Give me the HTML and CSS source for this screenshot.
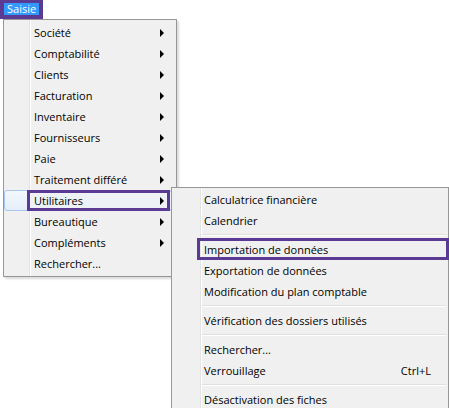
FILE: index.html
```html
<html>

<head>
    <title>Saisie</title>
    <link rel="stylesheet" href="styles.css">
</head>

<body>
    <div class="menubar">
        <span class="menubar_title">Saisie</span>
    </div>

    <div class="menu main_menu">
        <div class="item">Société<span class="arrow"></span></div>
        <div class="item">Comptabilité<span class="arrow"></span></div>
        <div class="item">Clients<span class="arrow"></span></div>
        <div class="item">Facturation<span class="arrow"></span></div>
        <div class="item">Inventaire<span class="arrow"></span></div>
        <div class="item">Fournisseurs<span class="arrow"></span></div>
        <div class="item">Paie<span class="arrow"></span></div>
        <div class="item">Traitement différé<span class="arrow"></span></div>
        <div class="item item_hover"><span class="mark mark_utilitaires"></span><span class="label">Utilitaires</span><span class="arrow"></span></div>
        <div class="item">Bureautique<span class="arrow"></span></div>
        <div class="item">Compléments<span class="arrow"></span></div>
        <div class="item">Rechercher...</div>
    </div>

    <div class="menu sub_menu">
        <div class="item">Calculatrice financière</div>
        <div class="item">Calendrier</div>
        <div class="separator"></div>
        <div class="item">Importation de données<span class="mark mark_import"></span></div>
        <div class="item">Exportation de données</div>
        <div class="item">Modification du plan comptable</div>
        <div class="separator"></div>
        <div class="item">Vérification des dossiers utilisés</div>
        <div class="separator"></div>
        <div class="item">Rechercher...</div>
        <div class="item">Verrouillage<span class="shortcut">Ctrl+L</span></div>
        <div class="separator"></div>
        <div class="item">Désactivation des fiches</div>
    </div>
</body>

</html>
```

FILE: styles.css
```css
body {
    margin: 0;
    background-color: #ffffff;
    font-family: 'Open Sans', 'Noto Sans', sans-serif;
    font-size: 11px;
    color: #000000;
}

/* top menu bar */
.menubar {
    display: inline-block;
    border: 3px solid #5b3a94;
    border-bottom-width: 4px;
    border-left-width: 4px;
    border-right-width: 4px;
    height: 12px;
}

.menubar_title {
    display: block;
    height: 12px;
    line-height: 12px;
    padding: 0 3px;
    background-color: #3399ff;
    color: #ffffff;
}

/* drop down menus */
.menu {
    position: absolute;
    box-sizing: border-box;
    background-color: #f0f0f0;
    border: 1px solid #979797;
    box-shadow: 2px 2px 2px rgba(0, 0, 0, 0.15);
}

.main_menu {
    left: 3px;
    top: 19px;
    width: 174px;
    padding: 2px 4px 2px 0;
    background-image: linear-gradient(to right, transparent 25px, #e2e3e3 25px, #e2e3e3 26px, #ffffff 26px, #ffffff 27px, transparent 27px);
}

.sub_menu {
    left: 171px;
    top: 187px;
    width: 278px;
    padding: 1px 2px;
    background-image: linear-gradient(to right, transparent 28px, #e2e3e3 28px, #e2e3e3 29px, #ffffff 29px, #ffffff 30px, transparent 30px);
}

.item {
    position: relative;
    display: flex;
    align-items: center;
    height: 21px;
    white-space: nowrap;
}

.main_menu .item {
    padding: 0 8px 0 30px;
}

.sub_menu .item {
    padding: 0 15px 0 30px;
}

.item_hover {
    box-sizing: border-box;
    border: 1px solid #a8c8ef;
    border-radius: 3px;
    background: linear-gradient(#f4f8fd, #e4eefb);
}

.main_menu .item_hover {
    padding-left: 29px;
    padding-right: 7px;
}

.item_hover .label,
.item_hover .arrow {
    position: relative;
}

.arrow {
    margin-left: auto;
    width: 0;
    height: 0;
    border-top: 4px solid transparent;
    border-bottom: 4px solid transparent;
    border-left: 4px solid #000000;
}

.shortcut {
    margin-left: auto;
}

.separator {
    height: 1px;
    margin: 3px 0 3px 28px;
    background-color: #e0e0e0;
    border-bottom: 1px solid #ffffff;
}

/* purple highlight frames */
.mark {
    position: absolute;
    box-sizing: border-box;
    border: 3px solid #5b3a94;
}

.mark_utilitaires {
    left: 22px;
    top: -1px;
    width: 143px;
    height: 21px;
    background-color: #eef1f6;
}

.mark_import {
    left: 23px;
    top: -1px;
    width: 252px;
    height: 22px;
}
```
